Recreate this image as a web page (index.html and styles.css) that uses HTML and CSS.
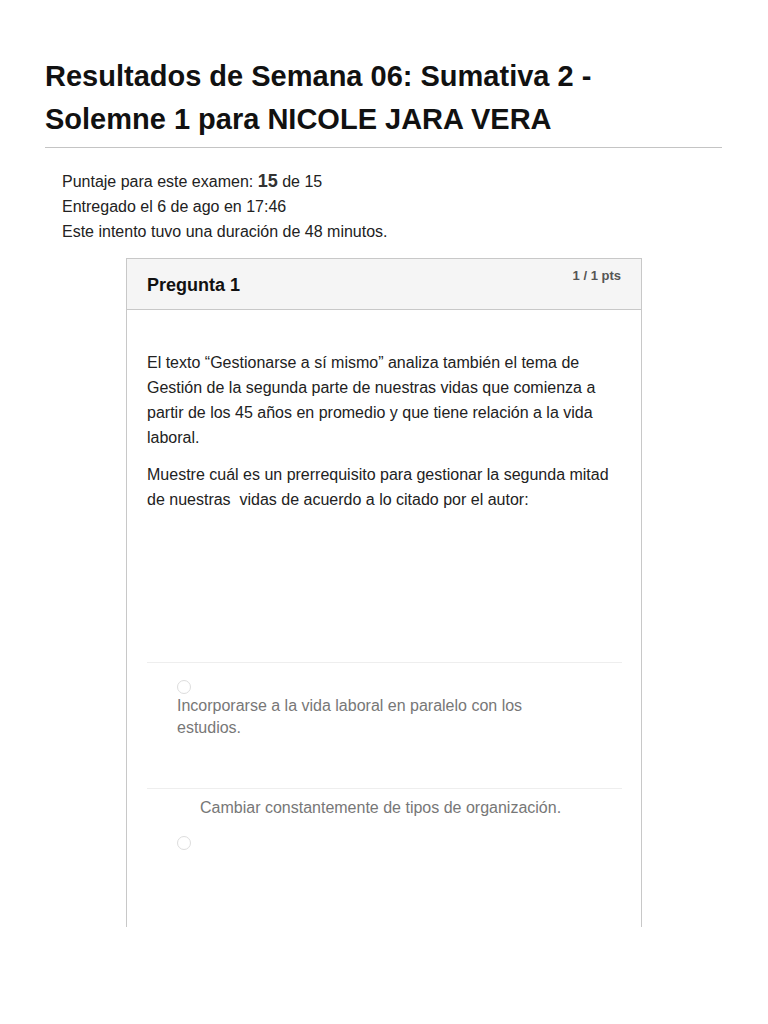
FILE: index.html
```html
<!DOCTYPE html>
<html lang="es">
<head>
<meta charset="utf-8">
<title>Resultados</title>
<link rel="stylesheet" href="styles.css">
</head>
<body>
<div class="page">
  <h1 class="title">Resultados de Semana 06: Sumativa 2 - Solemne 1 para NICOLE JARA VERA</h1>
  <hr class="rule">
  <div class="info">
    <div>Puntaje para este examen: <span class="score">15</span> de 15</div>
    <div>Entregado el 6 de ago en 17:46</div>
    <div>Este intento tuvo una duración de 48 minutos.</div>
  </div>
  <div class="card">
    <div class="card-head">
      <div class="q-title">Pregunta 1</div>
      <div class="pts">1 / 1 pts</div>
    </div>
    <div class="card-body">
      <p class="q-text">El texto “Gestionarse a sí mismo” analiza también el tema de Gestión de la segunda parte de nuestras vidas que comienza a partir de los 45 años en promedio y que tiene relación a la vida laboral.</p>
      <p class="q-text q-second">Muestre cuál es un prerrequisito para gestionar la segunda mitad de nuestras&nbsp; vidas de acuerdo a lo citado por el autor:</p>
      <div class="answers">
        <div class="answer a1">
          <span class="radio"></span>
          <div class="a-text">Incorporarse a la vida laboral en paralelo con los estudios.</div>
        </div>
        <div class="answer a2">
          <div class="a-text indent">Cambiar constantemente de tipos de organización.</div>
          <span class="radio"></span>
        </div>
      </div>
    </div>
  </div>
</div>
</body>
</html>
```

FILE: styles.css
```css
html, body {
  margin: 0;
  padding: 0;
  background: #ffffff;
}

body {
  font-family: "Liberation Sans", Arial, sans-serif;
  color: #222222;
}

.page {
  padding: 55px 46px 0 45px;
}

.title {
  margin: 0;
  font-size: 29px;
  line-height: 43px;
  font-weight: bold;
  color: #111111;
  max-width: 640px;
}

.rule {
  margin: 6px 0 0 0;
  border: 0;
  border-top: 1px solid #c4c4c4;
  height: 0;
}

.info {
  margin: 21px 0 0 17px;
  font-size: 16px;
  line-height: 25px;
  color: #222222;
}

.score {
  font-weight: bold;
  font-size: 18px;
  color: #333333;
}

.card {
  margin: 14px 0 0 81px;
  width: 516px;
  height: 669px;
  border: 1px solid #c8c8c8;
  border-bottom: 0;
  box-sizing: border-box;
}

.card-head {
  display: flex;
  justify-content: space-between;
  align-items: flex-start;
  background: #f5f5f5;
  border-bottom: 1px solid #c8c8c8;
  height: 51px;
  box-sizing: border-box;
  padding: 0 20px 0 20px;
}

.q-title {
  font-size: 18px;
  font-weight: bold;
  color: #111111;
  line-height: 20px;
  margin-top: 16px;
}

.pts {
  font-size: 13px;
  font-weight: bold;
  color: #555555;
  line-height: 16px;
  margin-top: 9px;
}

.card-body {
  padding: 40px 19px 0 20px;
}

.q-text {
  margin: 0;
  font-size: 16px;
  line-height: 25px;
  color: #222222;
}

.q-second {
  margin-top: 12px;
}

.answers {
  margin-top: 150px;
}

.answer {
  border-top: 1px solid #eeeeee;
  box-sizing: border-box;
  padding-left: 30px;
}

.a1 {
  height: 126px;
  padding-top: 17px;
}

.a2 {
  height: 124px;
  padding-top: 8px;
}

.radio {
  display: block;
  width: 12px;
  height: 12px;
  border: 1px solid #dddddd;
  border-radius: 50%;
}

.a1 .radio {
  margin-bottom: 1px;
}

.a-text {
  font-size: 16px;
  line-height: 22px;
  color: #777777;
  max-width: 380px;
}

.a2 .radio {
  margin-top: 17px;
}

.indent {
  padding-left: 23px;
  max-width: none;
}
```
